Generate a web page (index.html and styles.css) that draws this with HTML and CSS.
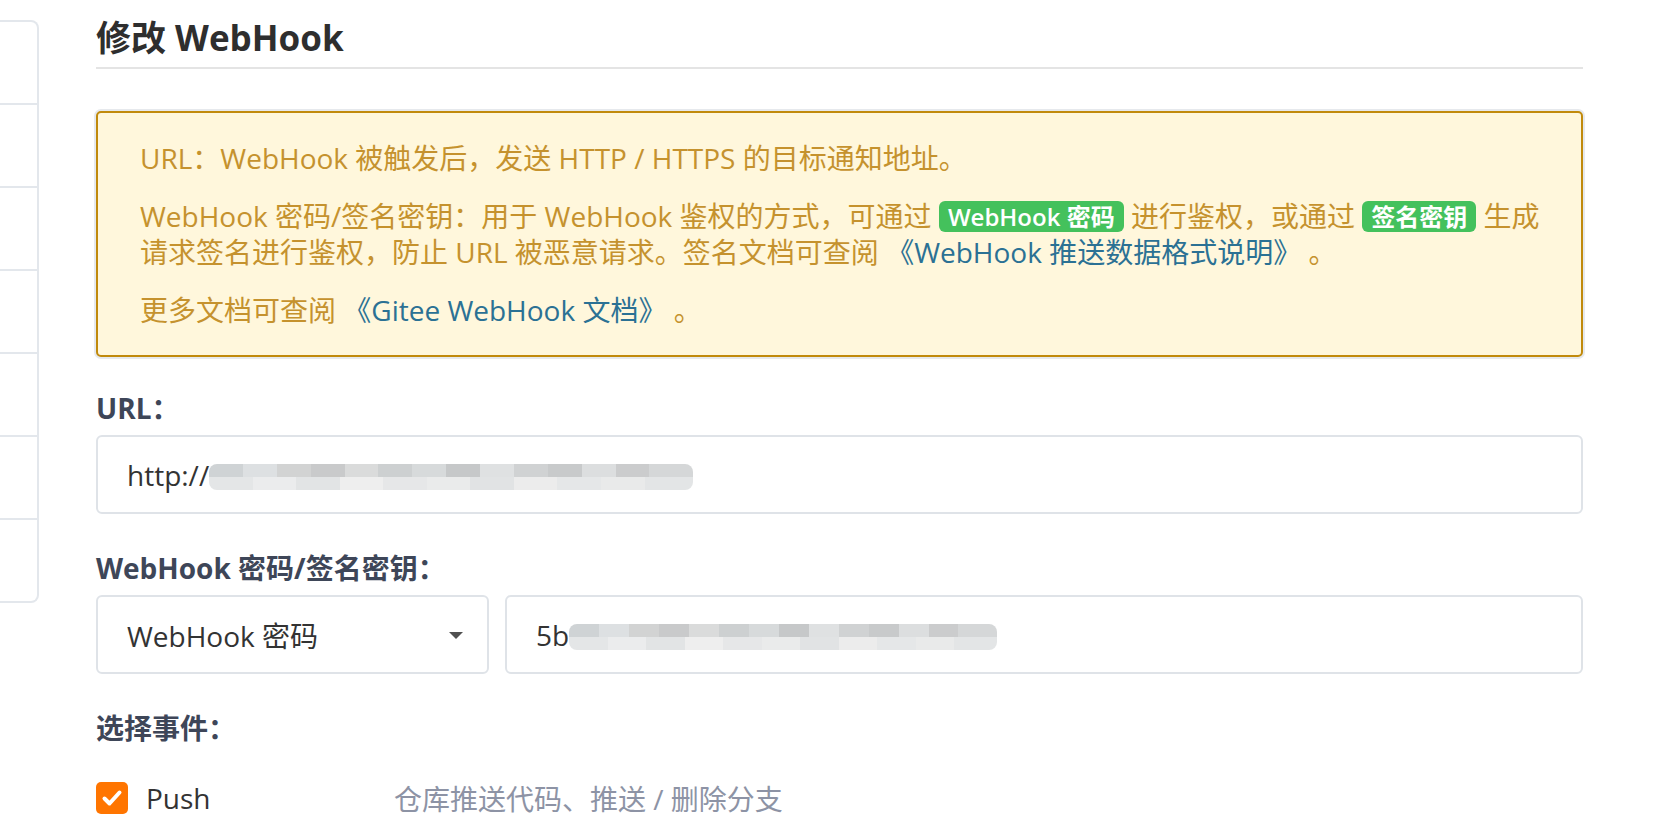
FILE: index.html
```html
<!DOCTYPE html>
<html lang="zh-CN">
<head>
    <meta charset="UTF-8">
    <meta name="viewport" content="width=device-width, initial-scale=1.0">
    <title>修改 WebHook</title>
    <link rel="stylesheet" href="styles.css">
</head>
<body>
    <div class="page">
        <div class="side-menu">
            <div class="side-item"></div>
            <div class="side-item"></div>
            <div class="side-item"></div>
            <div class="side-item"></div>
            <div class="side-item"></div>
            <div class="side-item"></div>
            <div class="side-item"></div>
        </div>

        <div class="main">
            <h2 class="page-title">修改 WebHook</h2>

            <div class="tips">
                <p>URL：WebHook 被触发后，发送 HTTP / HTTPS 的目标通知地址。</p>
                <p>WebHook 密码/签名密钥：用于 WebHook 鉴权的方式，可通过 <span class="badge">WebHook 密码</span> 进行鉴权，或通过 <span class="badge">签名密钥</span> 生成<br>请求签名进行鉴权，防止 URL 被恶意请求。签名文档可查阅 <a href="#">《WebHook 推送数据格式说明》</a> 。</p>
                <p>更多文档可查阅 <a href="#">《Gitee WebHook 文档》</a> 。</p>
            </div>

            <div class="field">
                <label>URL：</label>
                <div class="input-box">
                    <span>http://</span><span class="mosaic url-mosaic"></span>
                </div>
            </div>

            <div class="field">
                <label>WebHook 密码/签名密钥：</label>
                <div class="field-row">
                    <div class="input-box select-box">
                        <span>WebHook 密码</span>
                        <i class="caret"></i>
                    </div>
                    <div class="input-box secret-box">
                        <span>5b</span><span class="mosaic secret-mosaic"></span>
                    </div>
                </div>
            </div>

            <div class="field">
                <label>选择事件：</label>
                <div class="event-row">
                    <div class="event-name">
                        <span class="checkbox">
                            <svg width="32" height="32" viewBox="0 0 32 32"><polyline points="8.5,16.5 13.5,21.5 23.5,10.5" fill="none" stroke="#fff" stroke-width="4" stroke-linecap="round" stroke-linejoin="round"/></svg>
                        </span>
                        <span>Push</span>
                    </div>
                    <div class="event-desc">仓库推送代码、推送 / 删除分支</div>
                </div>
            </div>
        </div>
    </div>
</body>
</html>
```

FILE: styles.css
```css
body {
    margin: 0;
    font-family: "Open Sans", "Noto Sans CJK SC", sans-serif;
    font-size: 28px;
    color: #333;
    background: #fff;
    overflow: hidden;
}
.page {
    display: flex;
    align-items: flex-start;
}
.side-menu {
    width: 37px;
    margin-top: 20px;
    border: 2px solid #e3e7ec;
    border-left: none;
    border-radius: 0 8px 8px 0;
}
.side-item {
    height: 81px;
    border-bottom: 2px solid #e3e7ec;
}
.side-item:last-child {
    border-bottom: none;
}
.main {
    width: 1487px;
    margin-left: 57px;
}
.page-title {
    margin: 14px 0 0;
    padding-bottom: 5px;
    font-size: 35px;
    line-height: 48px;
    font-weight: bold;
    color: #2e2e2e;
    border-bottom: 2px solid #e4e4e4;
}
.tips {
    margin-top: 42px;
    padding: 27px 42px 27px;
    background: #fff7dc;
    border: 2px solid #c18a0c;
    border-radius: 5px;
    box-shadow: 0 0 0 2px #e6e9ed;
    color: #c5922e;
    white-space: nowrap;
}
.tips p {
    margin: 22px 0 0;
    line-height: 36px;
}
.tips p:first-child {
    margin-top: 0;
}
.tips a {
    color: #2b7194;
    text-decoration: none;
}
.badge {
    display: inline-block;
    padding: 0 9px;
    line-height: 31px;
    font-size: 24px;
    font-weight: 600;
    color: #fff;
    background: #44c15c;
    border-radius: 6px;
    vertical-align: 1px;
}
.field {
    margin-top: 33px;
}
.field + .field {
    margin-top: 36px;
}
.field label {
    display: block;
    margin-bottom: 9px;
    line-height: 36px;
    font-weight: bold;
    color: #3e4658;
}
.input-box {
    display: flex;
    align-items: center;
    box-sizing: border-box;
    height: 79px;
    padding: 0 29px;
    border: 2px solid #dfe3e8;
    border-radius: 6px;
    color: #333;
}
.field-row {
    display: flex;
    gap: 16px;
}
.select-box {
    width: 393px;
    justify-content: space-between;
    padding-right: 24px;
}
.caret {
    width: 0;
    height: 0;
    border-left: 7px solid transparent;
    border-right: 7px solid transparent;
    border-top: 7px solid #505050;
    margin-top: 2px;
}
.secret-box {
    flex: 1;
}
.mosaic {
    display: inline-block;
    height: 26px;
    margin-top: 4px;
    border-radius: 8px;
    background:
        linear-gradient(to right, #cfd3d5 0 7%, #dde0e2 7% 14%, #d2d3d3 14% 21%, #c9cacb 21% 28%, #dadbdb 28% 35%, #cdd0d1 35% 42%, #d7dadb 42% 49%, #c6c8c9 49% 56%, #dfe1e2 56% 63%, #d0d2d3 63% 70%, #c8cacb 70% 77%, #dcdedf 77% 84%, #cbcccd 84% 91%, #d5d7d8 91% 100%) top / 100% 50% no-repeat,
        linear-gradient(to right, #e4e6e7 0 9%, #ebeced 9% 18%, #e2e4e5 18% 27%, #eeeeee 27% 36%, #e6e7e8 36% 45%, #eaebeb 45% 54%, #e1e3e4 54% 63%, #ececec 63% 72%, #e5e7e8 72% 81%, #e9eaea 81% 90%, #e3e5e6 90% 100%) bottom / 100% 50% no-repeat;
}
.url-mosaic {
    width: 484px;
}
.secret-mosaic {
    width: 428px;
}
.event-row {
    display: flex;
    align-items: center;
    margin-top: 32px;
}
.event-name {
    display: flex;
    align-items: center;
    gap: 18px;
    width: 298px;
    color: #333;
}
.checkbox {
    display: block;
    width: 32px;
    height: 32px;
    background: #ff7500;
    border-radius: 5px;
}
.checkbox svg {
    display: block;
}
.event-desc {
    color: #8d93a5;
}
```
